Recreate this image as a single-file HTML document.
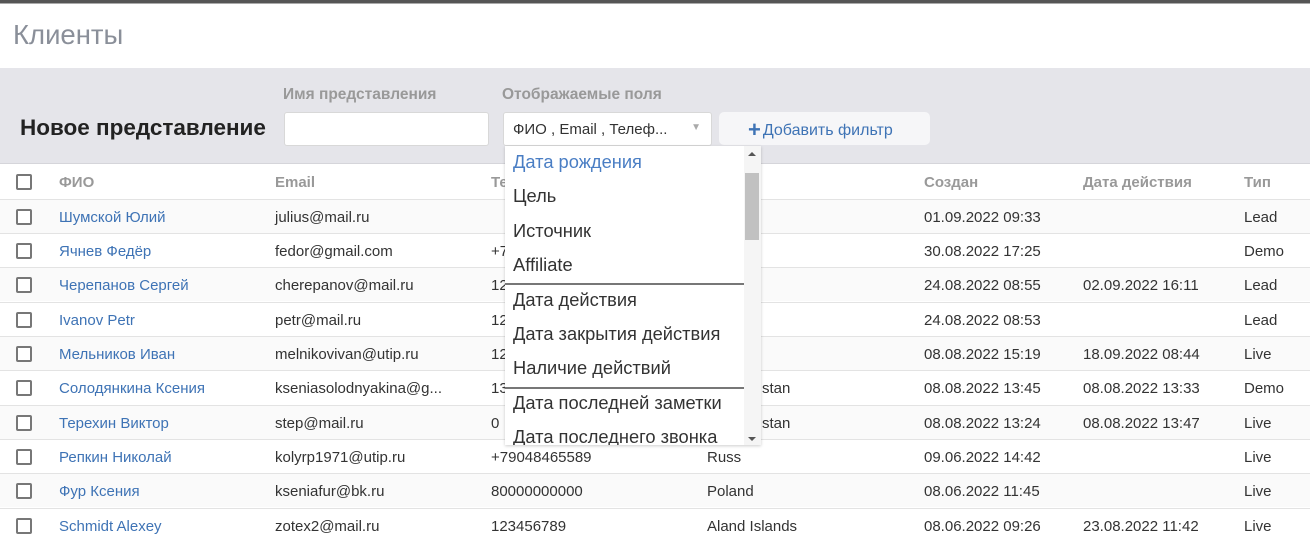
<!DOCTYPE html>
<html><head><meta charset="utf-8"><style>
*{box-sizing:border-box;margin:0;padding:0}
body{width:1310px;height:540px;overflow:hidden;background:#fff;font-family:"Liberation Sans",Arial,sans-serif;position:relative;color:#333}
.a{position:absolute;white-space:nowrap}
.topb{left:0;top:0;width:1310px;height:4px;background:#555;border-bottom:1px solid #aaa}
.title{left:13px;top:19px;font-size:27.5px;color:#8a8f99}
.band{left:0;top:68px;width:1310px;height:96px;background:#e5e5ea;border-bottom:1px solid #d5d5da}
.lbl{font-size:15.5px;font-weight:bold;color:#999}
.inp{background:#fff;border:1px solid #d8d8d8;border-radius:3px}
.row{left:0;width:1310px;height:34px;border-top:1px solid #e3e3e3;font-size:15px}
.row span{position:absolute;top:9px}
.cb{position:absolute;left:16px;top:9px;width:16px;height:16px;border:2px solid #777;border-radius:2px;background:#fff}
.hd span{font-weight:bold;color:#999}
.n{color:#3e73b5}
.dd{left:505px;top:146px;width:256px;height:299px;background:#fff;box-shadow:0 1px 3px rgba(0,0,0,.2);overflow:hidden}
.dd div{position:absolute;left:8px;font-size:18.3px;color:#333}
</style></head><body>
<div class="a topb"></div>
<div class="a title">Клиенты</div>
<div class="a band"></div>
<div class="a lbl" style="left:283px;top:86px">Имя представления</div>
<div class="a lbl" style="left:502px;top:86px">Отображаемые поля</div>
<div class="a" style="left:20px;top:115px;font-size:22.5px;font-weight:bold;color:#222">Новое представление</div>
<div class="a inp" style="left:284px;top:112px;width:205px;height:34px"></div>
<div class="a inp" style="left:503px;top:112px;width:209px;height:34px;font-size:15px;padding:8px 0 0 9px;color:#333">ФИО , Email , Телеф...<span style="position:absolute;right:10px;top:9px;font-size:10px;color:#aaa">▼</span></div>
<div class="a" style="left:719px;top:112px;width:211px;height:33px;background:#f6f6f8;border-radius:5px;color:#3e73b5;font-size:16px;padding:3px 0 0 29px"><b style="font-size:22px;position:relative;top:2px;margin-right:2px">+</b>Добавить фильтр</div>

<div class="a row hd" style="top:165px;border-top:none"><i class="cb"></i><span style="left:59px">ФИО</span><span style="left:275px">Email</span><span style="left:491px">Те</span><span style="left:924px">Создан</span><span style="left:1083px">Дата действия</span><span style="left:1244px">Тип</span></div>
<div class="a row" style="top:199px;background:#fafafa"><i class="cb"></i><span class="n" style="left:59px">Шумской Юлий</span><span style="left:275px">julius@mail.ru</span><span style="left:924px">01.09.2022 09:33</span><span style="left:1244px">Lead</span></div>
<div class="a row" style="top:233px"><i class="cb"></i><span class="n" style="left:59px">Ячнев Федёр</span><span style="left:275px">fedor@gmail.com</span><span style="left:491px">+7</span><span style="left:924px">30.08.2022 17:25</span><span style="left:1244px">Demo</span></div>
<div class="a row" style="top:267px;background:#fafafa"><i class="cb"></i><span class="n" style="left:59px">Черепанов Сергей</span><span style="left:275px">cherepanov@mail.ru</span><span style="left:491px">12</span><span style="left:924px">24.08.2022 08:55</span><span style="left:1083px">02.09.2022 16:11</span><span style="left:1244px">Lead</span></div>
<div class="a row" style="top:302px"><i class="cb"></i><span class="n" style="left:59px">Ivanov Petr</span><span style="left:275px">petr@mail.ru</span><span style="left:491px">12</span><span style="left:924px">24.08.2022 08:53</span><span style="left:1244px">Lead</span></div>
<div class="a row" style="top:336px;background:#fafafa"><i class="cb"></i><span class="n" style="left:59px">Мельников Иван</span><span style="left:275px">melnikovivan@utip.ru</span><span style="left:491px">12</span><span style="left:924px">08.08.2022 15:19</span><span style="left:1083px">18.09.2022 08:44</span><span style="left:1244px">Live</span></div>
<div class="a row" style="top:370px"><i class="cb"></i><span class="n" style="left:59px">Солодянкина Ксения</span><span style="left:275px">kseniasolodnyakina@g...</span><span style="left:491px">13</span><span style="left:762px">stan</span><span style="left:924px">08.08.2022 13:45</span><span style="left:1083px">08.08.2022 13:33</span><span style="left:1244px">Demo</span></div>
<div class="a row" style="top:405px;background:#fafafa"><i class="cb"></i><span class="n" style="left:59px">Терехин Виктор</span><span style="left:275px">step@mail.ru</span><span style="left:491px">0</span><span style="left:762px">stan</span><span style="left:924px">08.08.2022 13:24</span><span style="left:1083px">08.08.2022 13:47</span><span style="left:1244px">Live</span></div>
<div class="a row" style="top:439px"><i class="cb"></i><span class="n" style="left:59px">Репкин Николай</span><span style="left:275px">kolyrp1971@utip.ru</span><span style="left:491px">+79048465589</span><span style="left:707px">Russ</span><span style="left:924px">09.06.2022 14:42</span><span style="left:1244px">Live</span></div>
<div class="a row" style="top:473px;background:#fafafa"><i class="cb"></i><span class="n" style="left:59px">Фур Ксения</span><span style="left:275px">kseniafur@bk.ru</span><span style="left:491px">80000000000</span><span style="left:707px">Poland</span><span style="left:924px">08.06.2022 11:45</span><span style="left:1244px">Live</span></div>
<div class="a row" style="top:508px"><i class="cb"></i><span class="n" style="left:59px">Schmidt Alexey</span><span style="left:275px">zotex2@mail.ru</span><span style="left:491px">123456789</span><span style="left:707px">Aland Islands</span><span style="left:924px">08.06.2022 09:26</span><span style="left:1083px">23.08.2022 11:42</span><span style="left:1244px">Live</span></div>

<div class="a dd">
<div style="top:5px;color:#4a7ec4">Дата рождения</div>
<div style="top:39px">Цель</div>
<div style="top:74px">Источник</div>
<div style="top:108px">Affiliate</div>
<p style="position:absolute;left:0;top:137px;width:239px;height:2px;background:#777"></p>
<div style="top:143px">Дата действия</div>
<div style="top:177px">Дата закрытия действия</div>
<div style="top:211px">Наличие действий</div>
<p style="position:absolute;left:0;top:241px;width:239px;height:2px;background:#777"></p>
<div style="top:246px">Дата последней заметки</div>
<div style="top:280px">Дата последнего звонка</div>
<p style="position:absolute;left:239px;top:0;width:17px;height:299px;background:#f5f5f5"></p>
<p style="position:absolute;left:240px;top:27px;width:14px;height:67px;background:#c1c1c1"></p>
<p style="position:absolute;left:243px;top:6px;width:0;height:0;border:4px solid transparent;border-bottom:4px solid #555;border-top:none"></p>
<p style="position:absolute;left:243px;top:291px;width:0;height:0;border:4px solid transparent;border-top:4px solid #555;border-bottom:none"></p>
</div>
</body></html>
